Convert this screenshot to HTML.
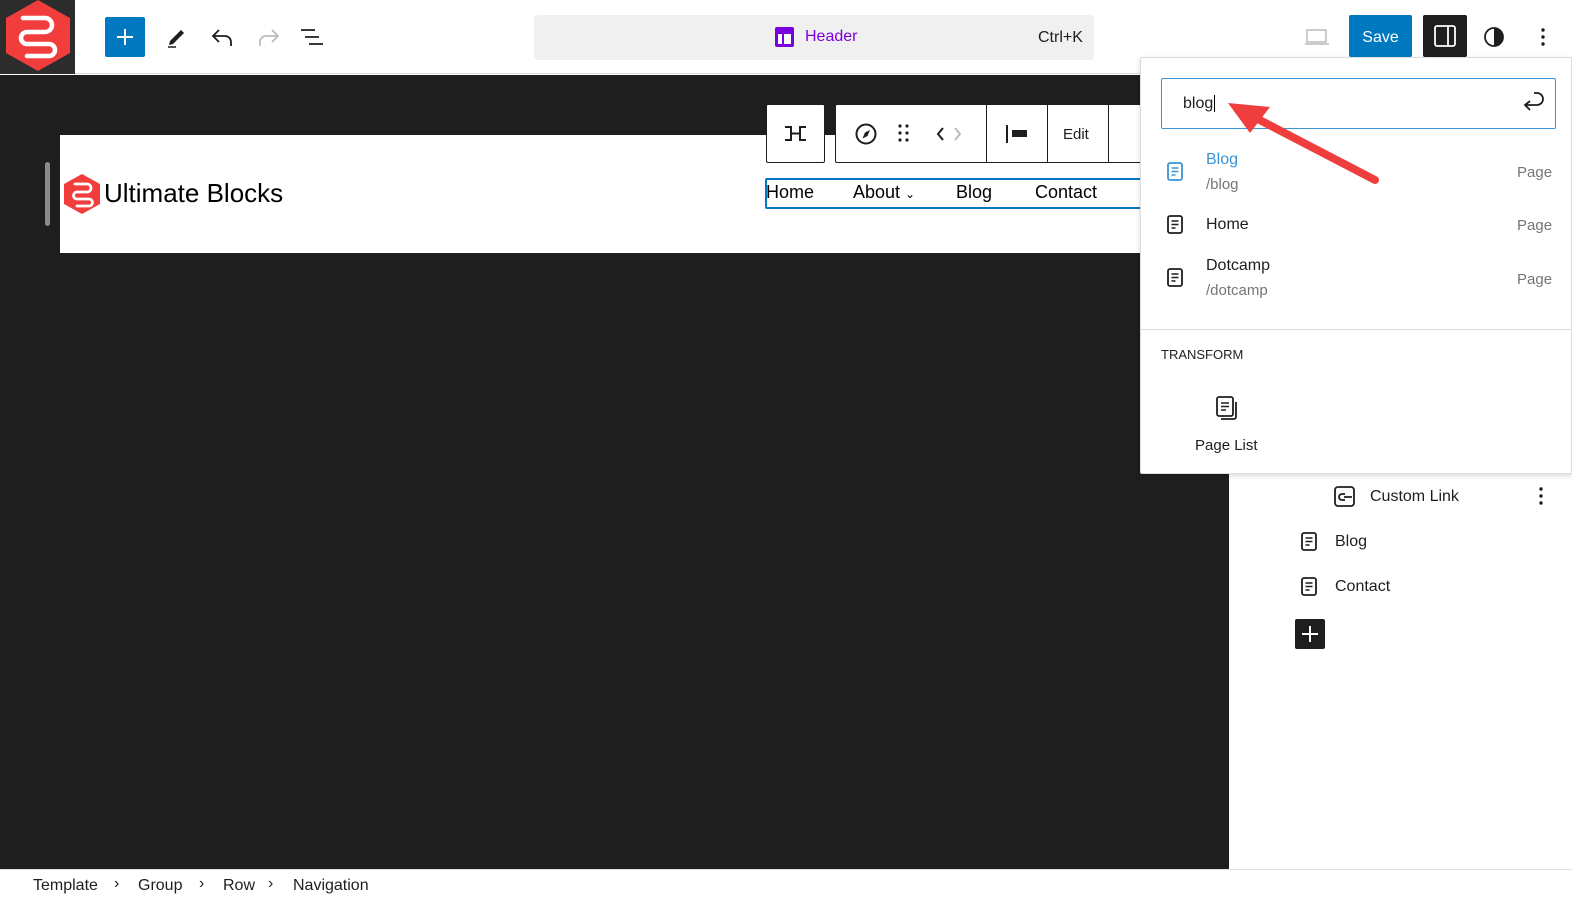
<!DOCTYPE html>
<html><head><meta charset="utf-8"><style>
*{margin:0;padding:0;box-sizing:border-box}
body{width:1572px;height:897px;overflow:hidden;background:#fff;font-family:"Liberation Sans",sans-serif;position:relative;color:#1e1e1e}
.a{position:absolute}
.t{font-size:15px;color:#1e1e1e}
</style></head><body>
<svg width="0" height="0" style="position:absolute"><defs>
<g id="pg"><rect x="4" y="3" width="14" height="17" rx="2" fill="none" stroke="currentColor" stroke-width="1.8"/><path d="M7.5 8h7M7.5 11.5h7M7.5 15h4" stroke="currentColor" stroke-width="1.6"/></g>
</defs></svg>

<!-- top bar -->
<div class="a" style="left:0;top:0;width:1572px;height:74px;background:#fff;border-bottom:1px solid #e0e0e0"></div>
<div class="a" style="left:0;top:0;width:75px;height:74px;background:#2c2c2c">
<svg width="75" height="74" viewBox="0 0 75 74"><polygon points="38,2 70,20 70,55 38,73 6,55 6,20" fill="#f23d3d" transform="translate(0,-2)"/><path d="M24 22h22a7 7 0 0 1 0 14H28a6 6 0 0 0 0 12h22a6 6 0 0 1 0 12H28" fill="none" stroke="#fff" stroke-width="4.5" stroke-linecap="round" transform="translate(-1,-4)"/></svg></div>
<div class="a" style="left:105px;top:17px;width:40px;height:40px;background:#0079c1;border-radius:2px"><svg width="40" height="40"><path d="M20 12v16M12 20h16" stroke="#fff" stroke-width="2"/></svg></div>
<svg class="a" style="left:164px;top:25px" width="26" height="24"><path d="M6 16l11-11 3 3-11 11-4 1z" fill="#1e1e1e"/><path d="M4 22h8" stroke="#1e1e1e" stroke-width="1.5"/></svg>
<svg class="a" style="left:210px;top:26px" width="26" height="22"><path d="M9 4L3 10l6 6M3 10h12a6 6 0 0 1 6 6v4" fill="none" stroke="#1e1e1e" stroke-width="1.8"/></svg>
<svg class="a" style="left:255px;top:26px" width="26" height="22"><path d="M17 4l6 6-6 6M23 10H11a6 6 0 0 0-6 6v4" fill="none" stroke="#bbb" stroke-width="1.8"/></svg>
<svg class="a" style="left:300px;top:27px" width="26" height="22"><path d="M1 3h14M5 10h14M9 17h14" stroke="#1e1e1e" stroke-width="1.8"/></svg>
<div class="a" style="left:534px;top:15px;width:560px;height:45px;background:#f0f0f0;border-radius:4px"></div>
<svg class="a" style="left:775px;top:27px" width="20" height="20"><rect x="0" y="0" width="19" height="20" rx="2" fill="#7a00df"/><rect x="3" y="7" width="4" height="10" fill="#fff"/><rect x="9" y="7" width="7" height="10" fill="#fff"/></svg>
<div class="a" style="left:805px;top:28px;font-size:16px;color:#7a00df">Header</div>
<div class="a" style="left:1038px;top:29px;font-size:16px;color:#1e1e1e">Ctrl+K</div>
<svg class="a" style="left:1304px;top:28px" width="26" height="18"><rect x="3" y="2" width="19" height="12" fill="none" stroke="#bbb" stroke-width="1.5"/><path d="M1 16h24" stroke="#bbb" stroke-width="1.5"/></svg>
<div class="a" style="left:1349px;top:15px;width:63px;height:42px;background:#0079c1;border-radius:2px;color:#fff;font-size:16px;text-align:center;line-height:46px">Save</div>
<div class="a" style="left:1423px;top:15px;width:44px;height:42px;background:#1e1e1e;border-radius:2px"><svg width="44" height="42"><rect x="12" y="11" width="20" height="20" rx="2" fill="none" stroke="#fff" stroke-width="1.8"/><path d="M25 11v20" stroke="#fff" stroke-width="1.8"/></svg></div>
<svg class="a" style="left:1483px;top:26px" width="22" height="22"><circle cx="11" cy="11" r="9" fill="none" stroke="#1e1e1e" stroke-width="1.8"/><path d="M11 2a9 9 0 0 1 0 18z" fill="#1e1e1e"/></svg>
<svg class="a" style="left:1538px;top:27px" width="10" height="22"><circle cx="5" cy="3" r="1.7" fill="#1e1e1e"/><circle cx="5" cy="10" r="1.7" fill="#1e1e1e"/><circle cx="5" cy="17" r="1.7" fill="#1e1e1e"/></svg>

<!-- canvas -->
<div class="a" style="left:0;top:75px;width:1229px;height:794px;background:#1e1e1e"></div>
<div class="a" style="left:45px;top:162px;width:5px;height:64px;background:#8a8a8a;border-radius:3px"></div>
<div class="a" style="left:60px;top:135px;width:1169px;height:118px;background:#fff"></div>
<svg class="a" style="left:62px;top:173px" width="40" height="42" viewBox="0 0 40 42"><polygon points="20,1 38,11 38,31 20,41 2,31 2,11" fill="#f23d3d"/><path d="M13 13h12a4 4 0 0 1 0 8h-10a3.5 3.5 0 0 0 0 7h12a3.5 3.5 0 0 1 0 7H15" fill="none" stroke="#fff" stroke-width="2.8" stroke-linecap="round" transform="translate(0,-2)"/></svg>
<div class="a" style="left:104px;top:178px;font-size:26px;color:#000">Ultimate Blocks</div>
<!-- block toolbar -->
<div class="a" style="left:766px;top:104px;width:59px;height:59px;background:#fff;border:1px solid #1e1e1e;border-radius:2px"><svg width="57" height="57"><path d="M18 22h6v13h-6M39 22h-6v13h6M24 28.5h9" fill="none" stroke="#1e1e1e" stroke-width="2"/></svg></div>
<div class="a" style="left:835px;top:104px;width:310px;height:59px;background:#fff;border:1px solid #1e1e1e;border-radius:2px"></div>
<svg class="a" style="left:853px;top:121px" width="26" height="26"><circle cx="13" cy="13" r="9.5" fill="none" stroke="#1e1e1e" stroke-width="2"/><path d="M17 9l-2.5 6-5 2.5 2.5-6z" fill="#1e1e1e"/></svg>
<svg class="a" style="left:896px;top:122px" width="16" height="24"><g fill="#1e1e1e"><circle cx="4" cy="4" r="1.6"/><circle cx="11" cy="4" r="1.6"/><circle cx="4" cy="11" r="1.6"/><circle cx="11" cy="11" r="1.6"/><circle cx="4" cy="18" r="1.6"/><circle cx="11" cy="18" r="1.6"/></g></svg>
<svg class="a" style="left:930px;top:124px" width="36" height="20"><path d="M13 4l-5 6 5 6" fill="none" stroke="#1e1e1e" stroke-width="2"/><path d="M25 4l5 6-5 6" fill="none" stroke="#bbb" stroke-width="2"/></svg>
<div class="a" style="left:986px;top:104px;width:1px;height:59px;background:#1e1e1e"></div>
<svg class="a" style="left:1003px;top:122px" width="28" height="24"><path d="M4 3v18" stroke="#1e1e1e" stroke-width="2"/><rect x="9" y="8" width="15" height="7" fill="#1e1e1e"/></svg>
<div class="a" style="left:1047px;top:104px;width:1px;height:59px;background:#1e1e1e"></div>
<div class="a" style="left:1063px;top:126px;font-size:15px">Edit</div>
<div class="a" style="left:1108px;top:104px;width:1px;height:59px;background:#1e1e1e"></div>
<!-- nav -->
<div class="a" style="left:765px;top:178px;width:380px;height:31px;border:2px solid #0079c1;border-radius:2px"></div>
<div class="a" style="left:766px;top:182px;font-size:18px;color:#000">Home</div>
<div class="a" style="left:853px;top:182px;font-size:18px;color:#000">About <span style="font-size:12px">⌄</span></div>
<div class="a" style="left:956px;top:182px;font-size:18px;color:#000">Blog</div>
<div class="a" style="left:1035px;top:182px;font-size:18px;color:#000">Contact</div>

<!-- sidebar -->
<div class="a" style="left:1229px;top:75px;width:343px;height:794px;background:#fff"></div>
<svg class="a" style="left:1332px;top:484px" width="26" height="26"><rect x="3" y="3" width="19" height="19" rx="3" fill="none" stroke="#1e1e1e" stroke-width="1.8"/><path d="M13 10h-3a3 3 0 0 0 0 6h3M12 13h8" fill="none" stroke="#1e1e1e" stroke-width="1.8"/></svg>
<div class="a t" style="left:1370px;top:488px;font-size:16px">Custom Link</div>
<svg class="a" style="left:1536px;top:486px" width="10" height="22"><circle cx="5" cy="3" r="1.7" fill="#1e1e1e"/><circle cx="5" cy="10" r="1.7" fill="#1e1e1e"/><circle cx="5" cy="17" r="1.7" fill="#1e1e1e"/></svg>
<svg class="a" style="left:1298px;top:530px;color:#1e1e1e" width="22" height="23"><use href="#pg"/></svg>
<div class="a t" style="left:1335px;top:533px;font-size:16px">Blog</div>
<svg class="a" style="left:1298px;top:575px;color:#1e1e1e" width="22" height="23"><use href="#pg"/></svg>
<div class="a t" style="left:1335px;top:578px;font-size:16px">Contact</div>
<div class="a" style="left:1295px;top:619px;width:30px;height:30px;background:#1e1e1e;border-radius:2px"><svg width="30" height="30"><path d="M15 7v16M7 15h16" stroke="#fff" stroke-width="2"/></svg></div>

<!-- popover -->
<div class="a" style="left:1140px;top:57px;width:432px;height:417px;background:#fff;border:1px solid #ddd;border-radius:2px;box-shadow:0 2px 6px rgba(0,0,0,.15)"></div>
<div class="a" style="left:1161px;top:78px;width:395px;height:51px;border:1.5px solid #3a94d6;border-radius:2px"></div>
<div class="a" style="left:1183px;top:95px;font-size:16px;color:#1e1e1e">blog<span style="border-left:1.5px solid #000;margin-left:1px"></span></div>
<svg class="a" style="left:1520px;top:90px" width="28" height="28"><path d="M10 20l-5-5 5-4M5 15h12a6 6 0 0 0 0-12h-3" fill="none" stroke="#1e1e1e" stroke-width="1.8"/></svg>
<svg class="a" style="left:1164px;top:160px;color:#3a94d6" width="22" height="23"><use href="#pg"/></svg>
<div class="a" style="left:1206px;top:151px;font-size:16px;color:#3a94d6">Blog</div>
<div class="a" style="left:1206px;top:176px;font-size:15px;color:#757575">/blog</div>
<div class="a" style="left:1517px;top:164px;font-size:15px;color:#757575">Page</div>
<svg class="a" style="left:1164px;top:213px;color:#1e1e1e" width="22" height="23"><use href="#pg"/></svg>
<div class="a" style="left:1206px;top:216px;font-size:16px;color:#1e1e1e">Home</div>
<div class="a" style="left:1517px;top:217px;font-size:15px;color:#757575">Page</div>
<svg class="a" style="left:1164px;top:266px;color:#1e1e1e" width="22" height="23"><use href="#pg"/></svg>
<div class="a" style="left:1206px;top:257px;font-size:16px;color:#1e1e1e">Dotcamp</div>
<div class="a" style="left:1206px;top:282px;font-size:15px;color:#757575">/dotcamp</div>
<div class="a" style="left:1517px;top:271px;font-size:15px;color:#757575">Page</div>
<div class="a" style="left:1141px;top:329px;width:431px;height:1px;background:#ddd"></div>
<div class="a" style="left:1161px;top:347px;font-size:13px;color:#1e1e1e">TRANSFORM</div>
<svg class="a" style="left:1214px;top:395px" width="28" height="28"><rect x="3" y="2" width="16" height="19" rx="2" fill="none" stroke="#1e1e1e" stroke-width="1.8"/><path d="M7 8h8M7 11.5h8M7 15h5" stroke="#1e1e1e" stroke-width="1.5"/><path d="M22 7v15a2 2 0 0 1-2 2H7" fill="none" stroke="#1e1e1e" stroke-width="1.8"/></svg>
<div class="a" style="left:1195px;top:437px;font-size:15px;color:#1e1e1e">Page List</div>

<!-- arrow -->
<svg class="a" style="left:1220px;top:95px" width="170" height="100"><path d="M155 85L30 20" stroke="#f03e3e" stroke-width="8" stroke-linecap="round"/><polygon points="8,8 50,12 30,38" fill="#f03e3e"/></svg>

<!-- breadcrumb -->
<div class="a" style="left:0;top:869px;width:1572px;height:28px;background:#fff;border-top:1px solid #e0e0e0"></div>
<div class="a" style="left:33px;top:877px;font-size:16px">Template</div>
<div class="a" style="left:114px;top:875px;font-size:16px">›</div>
<div class="a" style="left:138px;top:877px;font-size:16px">Group</div>
<div class="a" style="left:199px;top:875px;font-size:16px">›</div>
<div class="a" style="left:223px;top:877px;font-size:16px">Row</div>
<div class="a" style="left:268px;top:875px;font-size:16px">›</div>
<div class="a" style="left:293px;top:877px;font-size:16px">Navigation</div>
</body></html>
